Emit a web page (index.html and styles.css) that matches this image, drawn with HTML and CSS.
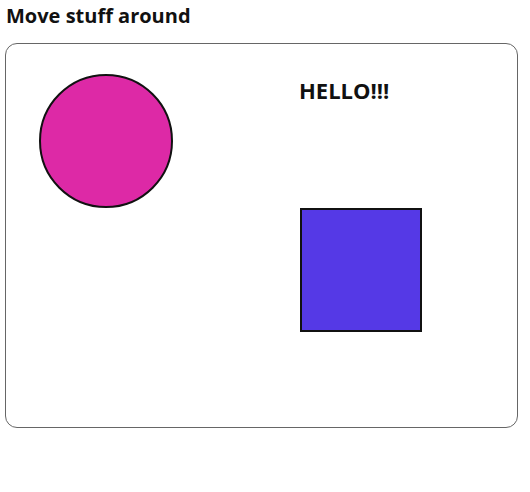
FILE: index.html
```html
<!DOCTYPE html>
<html>
<head>
<meta charset="utf-8">
<link rel="stylesheet" href="styles.css">
</head>
<body>
<h1 class="title">Move stuff around</h1>
<div class="canvas">
  <div class="circle"></div>
  <div class="hello">HELLO!!!</div>
  <div class="square"></div>
</div>
</body>
</html>
```
FILE: styles.css
```css
html, body { margin: 0; padding: 0; background: #fff; }
body { padding: 0 12px 0 5px; font-family: "Open Sans", sans-serif; }
.title {
  margin: 0;
  padding: 2px 0 0 1px;
  font-size: 20px;
  font-weight: 700;
  line-height: 28px;
  color: #111;
  height: 41px;
}
.canvas {
  position: relative;
  height: 383px;
  border: 1px solid #666;
  border-radius: 12px;
}
.circle {
  position: absolute;
  left: 33px;
  top: 30px;
  width: 130px;
  height: 130px;
  border: 2px solid #111;
  border-radius: 50%;
  background: #dd29a6;
}
.hello {
  position: absolute;
  left: 293px;
  top: 31px;
  font-size: 22px;
  font-weight: 700;
  line-height: 30px;
  color: #111;
}
.square {
  position: absolute;
  left: 294px;
  top: 164px;
  width: 118px;
  height: 120px;
  border: 2px solid #111;
  background: #5539e6;
}
```
